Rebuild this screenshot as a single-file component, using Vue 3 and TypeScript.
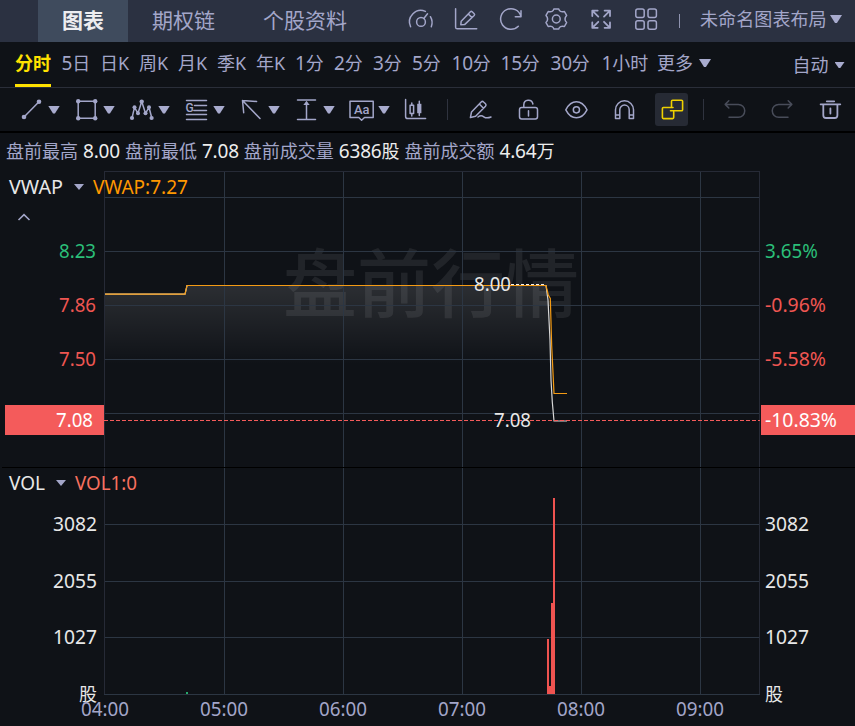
<script setup lang="ts">
interface Label { text: string; x: number; y: number; w: number; cls: string }

const periods: [string, string][] = [
  ['', '分时'], ['5', '日'], ['', '日K'], ['', '周K'], ['', '月K'], ['', '季K'], ['', '年K'],
  ['1', '分'], ['2', '分'], ['3', '分'], ['5', '分'], ['10', '分'], ['15', '分'], ['30', '分'], ['1', '小时'],
]

const stats: { name: string; value: string; unit: string }[] = [
  { name: '盘前最高', value: '8.00', unit: '' },
  { name: '盘前最低', value: '7.08', unit: '' },
  { name: '盘前成交量', value: '6386', unit: '股' },
  { name: '盘前成交额', value: '4.64', unit: '万' },
]

const hours: number[] = [224.5, 343.5, 462.5, 581.5, 700.5]
const priceRows: number[] = [197.5, 251.5, 305.5, 359.5, 413.5]
const volumeRows: number[] = [524.5, 581.5, 637.5]

const labels: Label[] = [
  { text: 'VWAP', x: 9, y: 194, w: 54, cls: 'white' },
  { text: 'VWAP:7.27', x: 93, y: 194, w: 95, cls: 'orange' },
  { text: '8.23', x: 59, y: 258, w: 37, cls: 'green' },
  { text: '7.86', x: 59, y: 312, w: 37, cls: 'red' },
  { text: '7.50', x: 59, y: 366, w: 37, cls: 'red' },
  { text: '3.65%', x: 765, y: 258, w: 53, cls: 'green' },
  { text: '-0.96%', x: 765, y: 312, w: 61, cls: 'red' },
  { text: '-5.58%', x: 765, y: 366, w: 61, cls: 'red' },
  { text: '7.08', x: 56, y: 427, w: 37, cls: 'bright' },
  { text: '-10.83%', x: 765, y: 427, w: 72, cls: 'bright' },
  { text: '8.00', x: 474, y: 291, w: 37, cls: 'white' },
  { text: '7.08', x: 494, y: 427, w: 37, cls: 'white' },
  { text: 'VOL', x: 9, y: 490, w: 36, cls: 'white' },
  { text: 'VOL1:0', x: 75, y: 490, w: 62, cls: 'coral' },
  { text: '3082', x: 53, y: 531, w: 44, cls: 'white' },
  { text: '2055', x: 53, y: 588, w: 44, cls: 'white' },
  { text: '1027', x: 53, y: 644, w: 44, cls: 'white' },
  { text: '股', x: 79, y: 701, w: 18, cls: 'white unit' },
  { text: '3082', x: 765, y: 531, w: 44, cls: 'white' },
  { text: '2055', x: 765, y: 588, w: 44, cls: 'white' },
  { text: '1027', x: 765, y: 644, w: 44, cls: 'white' },
  { text: '股', x: 765, y: 701, w: 18, cls: 'white unit' },
  { text: '04:00', x: 81, y: 716, w: 48, cls: 'muted' },
  { text: '05:00', x: 200, y: 716, w: 48, cls: 'muted' },
  { text: '06:00', x: 319, y: 716, w: 48, cls: 'muted' },
  { text: '07:00', x: 438, y: 716, w: 48, cls: 'muted' },
  { text: '08:00', x: 557, y: 716, w: 48, cls: 'muted' },
  { text: '09:00', x: 676, y: 716, w: 48, cls: 'muted' },
]

const line = 'M105 294.2H185L187 285.5H546'
const pricePath = line + 'L548 300L550 340L551 380L552.3 402L554 421H567'
const vwapPath = line + 'L548.3 295L550.3 298.5L551.7 346L554 393.5H567'
const areaPath = line + 'L548 300L550 340L551 370H105Z'
</script>

<template>
  <div class="app">
    <header class="top">
      <nav class="tabs">
        <span class="tab active">图表</span>
        <span class="tab">期权链</span>
        <span class="tab">个股资料</span>
      </nav>
      <div class="top-icons">
        <svg class="icon" viewBox="0 0 24 24"><circle cx="12" cy="13.9" r="4.4" /><path d="M1.6 18.7A11.4 11.4 0 0 1 16.4 3.4M21.4 8.7A11.4 11.4 0 0 1 22.3 18.7M14.8 10.5L18.5 5.8" /></svg>
        <svg class="icon" viewBox="0 0 24 24"><path d="M1.6.8V19.2Q1.6 20.8 3.4 20.8H22.7M6.8 16.8L7.2 13.2L16.4 3.8Q17.3 3 18.2 3.8L20.2 5.8Q21 6.6 20.2 7.5L10.6 16.6ZM14.3 6L18 9.6" /></svg>
        <svg class="icon" viewBox="0 0 24 24"><path d="M21.9 8.4A10.3 10.3 0 1 0 19.3 18.2M22 2.8V8.7H16.3" /></svg>
        <svg class="icon" viewBox="0 0 24 24"><circle cx="12.3" cy="11" r="3.9" /><path d="M9.9 .9H14.7Q15.5 4.6 20.4 3.5L22.6 7.4Q19.4 11 22.6 14.6L20.4 18.5Q15.5 17.4 14.7 21.1H9.9Q9.1 17.4 4.2 18.5L2 14.6Q5.2 11 2 7.4L4.2 3.5Q9.1 4.6 9.9 .9Z" /></svg>
        <svg class="icon strong" viewBox="0 0 24 24"><path d="M3.3 8V2.6H8.7M3.3 2.6L9.3 8.6M15.6 2.6H21V8M21 2.6L15 8.6M3.3 14.4V19.8H8.7M3.3 19.8L9.3 13.8M15.6 19.8H21V14.4M21 19.8L15 13.8" /></svg>
        <svg class="icon" viewBox="0 0 24 24"><rect x="1.8" y="1" width="8.4" height="8.4" rx="2" /><rect x="14" y="1" width="8.4" height="8.4" rx="2" /><rect x="1.8" y="12.8" width="8.4" height="8.4" rx="2" /><rect x="14" y="12.8" width="8.4" height="8.4" rx="2" /></svg>
      </div>
      <i class="top-sep"></i>
      <span class="layout-name">未命名图表布局</span>
      <i class="caret"></i>
    </header>

    <nav class="periods">
      <span v-for="(p, i) in periods" :key="i" :class="['period', { on: i === 0 }]"><span v-if="p[0]" class="num">{{ p[0] }}</span>{{ p[1] }}</span>
      <span class="period more">更多<i class="caret"></i></span>
      <span class="period auto">自动<i class="caret small"></i></span>
    </nav>

    <div class="tools">
      <div class="tool-group draw">
        <svg class="icon" viewBox="0 0 24 24"><path d="M5 19L20 3.7" /><circle class="fill" cx="5" cy="19" r="2.3" /><circle class="fill" cx="20" cy="3.7" r="2.3" /></svg><i class="caret"></i>
        <svg class="icon" viewBox="0 0 24 24"><rect x="4.2" y="3.2" width="17" height="17" /><g class="fill"><circle cx="4.2" cy="3.2" r="2.2" /><circle cx="21.2" cy="3.2" r="2.2" /><circle cx="4.2" cy="20.2" r="2.2" /><circle cx="21.2" cy="20.2" r="2.2" /></g></svg><i class="caret"></i>
        <svg class="icon wide" viewBox="0 0 25 24"><path d="M3 20L5.5 9.3L9 15.3L12.7 3.6L16.5 15.3L20 9.3L22.8 20" /><g class="fill"><circle cx="3" cy="20" r="2.1" /><circle cx="5.5" cy="9.3" r="2" /><circle cx="9" cy="15.3" r="2" /><circle cx="12.7" cy="3.6" r="2.2" /><circle cx="16.5" cy="15.3" r="2" /><circle cx="20" cy="9.3" r="2" /><circle cx="22.6" cy="20" r="2.1" /></g></svg><i class="caret"></i>
        <svg class="icon" viewBox="0 0 24 24"><path d="M2.5 2.5H22.5M10.5 7.5H22.5M9.8 12.5H22.5M2.5 16.5H22.5M2.5 21.5H22.5" /><text class="glyph" x="1.5" y="14.3" font-size="12">G</text></svg><i class="caret"></i>
        <svg class="icon" viewBox="0 0 24 24"><path d="M21 20.5L3.5 2.5L17.6 3.5M3.5 2.5L4.7 14.7" /></svg><i class="caret"></i>
        <svg class="icon" viewBox="0 0 24 24"><path d="M3.5 2H21.5M3.5 21.5H21.5M12.5 4V21" /><path class="fill" d="M12.5 3L15.7 7H9.3Z" /></svg><i class="caret"></i>
        <svg class="icon wide" viewBox="0 0 25 24"><path d="M1 3.2H24.2V19.5H15.5L12.6 22.2L9.8 19.5H1Z" /><text class="glyph" x="5" y="15.6" font-size="12.5" textLength="15.5" lengthAdjust="spacingAndGlyphs">Aa</text></svg><i class="caret"></i>
        <svg class="icon" viewBox="0 0 24 24"><path d="M1.6 1.5V18.5Q1.6 20.6 3.8 20.6H21.6M7.8 5V7M7.8 15.5V18M15.3 3.3V17.6" /><rect x="6.1" y="7.2" width="3.5" height="8.2" /><rect class="fill" x="13.2" y="5.8" width="4.2" height="9.4" /></svg>
      </div>
      <i class="sep first"></i>
      <div class="tool-group cells">
        <span class="cell"><svg class="icon" viewBox="0 0 24 24"><path d="M2.4 19.6L3.5 14L13.2 4Q14.4 2.8 15.6 4L17.5 5.8Q18.6 7 17.5 8.2L7.6 18.3ZM11.3 6L15.5 10.2M10 19Q13 16.8 15.8 18.8T23 19" /></svg></span>
        <span class="cell"><svg class="icon" viewBox="0 0 24 24"><rect x="3.5" y="9.5" width="18" height="11.5" rx="2.2" /><path d="M7.8 9.2V6.8A4.6 4.6 0 0 1 16.9 6M12.5 12.8V18" /></svg></span>
        <span class="cell"><svg class="icon" viewBox="0 0 24 24"><path d="M1.8 11.8Q6 3.8 12.4 3.8T23 11.8Q18.8 19.8 12.4 19.8T1.8 11.8Z" /><circle cx="12.4" cy="11.8" r="3.1" /></svg></span>
        <span class="cell"><svg class="icon" viewBox="0 0 24 24"><path d="M3.5 20.5V11.8A9 9 0 0 1 21.5 11.8V20.5H17.2V11.8A4.7 4.7 0 0 0 7.8 11.8V20.5ZM3.5 17H7.8M17.2 17H21.5" /></svg></span>
        <span class="cell"><span class="chosen"><svg class="icon gold" viewBox="0 0 24 24"><path d="M11.5 8.5V3.3Q11.5 2.2 12.6 2.2H21.5Q22.6 2.2 22.6 3.3V11.7Q22.6 12.8 21.5 12.8H10.5M13.7 14V19.6Q13.7 20.6 12.6 20.6H3.4Q2.4 20.6 2.4 19.6V10.5Q2.4 9.5 3.4 9.5H13" /></svg></span></span>
      </div>
      <i class="sep second"></i>
      <div class="tool-group cells">
        <span class="cell"><svg class="icon dim" viewBox="0 0 24 24"><path d="M5.8 2.8L2.2 6.4L5.8 10M2.4 6.4H15.3A6.4 6.4 0 0 1 15.3 19.3H6" /></svg></span>
        <span class="cell"><svg class="icon dim" viewBox="0 0 24 24"><path d="M17.2 2.8L20.8 6.4L17.2 10M20.6 6.4H7.7A6.4 6.4 0 0 0 7.7 19.3H17" /></svg></span>
        <span class="cell"><svg class="icon strong" viewBox="0 0 24 24"><path d="M7.8 3.3H15.2M1.6 6.3H21.3M4.3 6.3V17.2Q4.3 20 7 20H15.7Q18.4 20 18.4 17.2V6.3M11.4 10.5V15.5" /></svg></span>
      </div>
    </div>

    <div class="stats">
      <template v-for="s in stats" :key="s.name">
        <span>{{ s.name }}</span><b><span class="num">{{ s.value }}</span>{{ s.unit }}</b>
      </template>
    </div>

    <svg class="chart" width="855" height="555" viewBox="0 171 855 555">
      <defs>
        <linearGradient id="area" gradientUnits="userSpaceOnUse" x1="0" y1="285" x2="0" y2="364">
          <stop offset="0" stop-color="#ffffff" stop-opacity=".12" />
          <stop offset="1" stop-color="#ffffff" stop-opacity="0" />
        </linearGradient>
      </defs>
      <text class="watermark" x="283" y="311" textLength="296">盘前行情</text>
      <path :d="areaPath" fill="url(#area)" />
      <g class="grid">
        <path v-for="x in hours" :key="x" :d="`M${x} 172V694`" />
        <path v-for="y in priceRows" :key="y" :d="`M104 ${y}H759`" />
        <path v-for="y in volumeRows" :key="y" :d="`M104 ${y}H759`" />
        <path d="M104 694.5H760" />
        <path class="frame" d="M104.5 694V171.5H759.5V694" />
      </g>
      <path class="divide" d="M2 467.5H855" />
      <path class="price" :d="pricePath" />
      <path class="vwap" :d="vwapPath" />
      <path class="last" d="M104 420.5H760" />
      <path class="leader" d="M511 284.5H546" />
      <rect class="tag" x="5" y="405" width="99" height="30" />
      <rect class="tag" x="761" y="405" width="94" height="30" />
      <path class="bars" d="M547 694V639H549V686H551V603H553V498H555V694Z" />
      <rect class="up-bar" x="186" y="692" width="2" height="2" />
      <path class="drop" d="M74 184H84L79 190ZM56 480H66L61 486Z" />
      <path class="fold" d="M18.5 220L24 214.7L29.5 220" />
      <text v-for="(l, i) in labels" :key="i" :class="['label', l.cls]" :x="l.x" :y="l.y" :textLength="l.w" lengthAdjust="spacingAndGlyphs">{{ l.text }}</text>
    </svg>
  </div>
</template>

<style>
body { background: #0f1217; }
</style>

<style scoped>
.app {
  width: 855px;
  height: 726px;
  overflow: hidden;
  background: #0f1217;
  color: #a3a6c9;
  font-family: "Noto Sans", "Noto Sans CJK SC", sans-serif;
  font-size: 18px;
  white-space: nowrap;
}
.top {
  display: flex;
  align-items: center;
  height: 42px;
  background: #2b3141;
}
.tabs {
  display: flex;
  width: 409px;
  height: 42px;
  padding-left: 38px;
  box-sizing: border-box;
  font-size: 21px;
  line-height: 40px;
}
.tab { margin-left: 24px; }
.tab + .tab + .tab { margin-left: 48px; }
.tab.active {
  width: 90px;
  margin-left: 0;
  background: #3f4b5d;
  color: #ededf0;
  font-weight: 700;
  text-align: center;
}
.top-icons {
  display: flex;
  gap: 21px;
  padding-bottom: 2px;
}
.top-sep {
  width: 1px;
  height: 14px;
  margin: 0 20px 0 21px;
  background: #8f93b0;
}
.layout-name { width: 130px; line-height: 38px; padding-bottom: 4px; letter-spacing: .1px; }
.icon {
  display: block;
  flex: none;
  width: 24px;
  height: 24px;
  overflow: visible;
  fill: none;
  stroke: #a3a6c9;
  stroke-width: 1.5;
  stroke-linejoin: round;
  stroke-linecap: round;
}
.icon.strong { stroke-width: 1.8; }
.icon.gold { stroke: #eed000; stroke-width: 1.6; }
.icon.dim { stroke: #484c59; }
.icon.wide { width: 25px; margin-right: -1px; }
.fill { fill: #a3a6c9; stroke: none; }
.glyph { fill: #a3a6c9; stroke: none; font-family: Roboto, sans-serif; font-weight: 500; }
.caret {
  display: block;
  flex: none;
  width: 12px;
  height: 8px;
  background: #a8abce;
  clip-path: polygon(0 0, 100% 0, 58% 100%, 42% 100%);
}
.caret.small { width: 10px; height: 6px; }
.top .caret { margin-bottom: 4px; }
.num { font-size: 19px; line-height: 1; letter-spacing: -.2px; }

.periods {
  display: grid;
  grid-template-columns: 46.5px 38.5px 39px 39px 39px 39px 39px 39px 39px 39px 39.5px 49px 50px 51px 55.5px 135.5px 54px;
  height: 45px;
  padding-left: 15px;
  border-bottom: 1px solid #2a2e39;
  line-height: 42px;
}
.period.on {
  width: 36px;
  height: 42px;
  border-bottom: 3px solid #ffe100;
  color: #ffe100;
  font-weight: 700;
}
.more, .auto { display: flex; align-items: center; height: 42px; }
.more .caret { margin-left: 6px; }
.auto { padding-top: 2px; }
.auto .caret { margin-left: 6px; }

.tools {
  display: flex;
  align-items: center;
  height: 43px;
  border-bottom: 2px solid #000;
}
.tool-group { display: flex; align-items: center; }
.draw { padding-left: 19px; }
.draw .caret { margin: 0 14px 0 5px; }
.sep { width: 1px; height: 21px; background: #2f333f; }
.sep.first { margin: 0 8px 0 19px; }
.sep.second { margin: 0 8px 0 7px; }
.cell { display: flex; justify-content: center; width: 48px; height: 33px; align-items: center; }
.chosen {
  display: flex;
  align-items: center;
  justify-content: center;
  width: 33px;
  height: 33px;
  border-radius: 3px;
  background: #262a34;
}
.stats {
  display: flex;
  gap: 5px;
  height: 38px;
  padding-left: 6px;
  line-height: 36px;
}
.stats b { color: #ededed; font-weight: 400; }

.chart { display: block; }
.watermark { font-size: 74px; font-weight: 500; fill: #fff; fill-opacity: .08; font-family: "Noto Sans CJK SC", sans-serif; }
.grid path { fill: none; stroke: #2c3643; shape-rendering: crispEdges; }
.grid .frame { stroke: #262a36; }
.divide { stroke: #000; stroke-width: 1; shape-rendering: crispEdges; }
.price { fill: none; stroke: #d8d8d8; stroke-width: 1.2; }
.vwap { fill: none; stroke: #f49b14; stroke-width: 1.2; }
.last { stroke: #f45b5b; stroke-dasharray: 4 2; shape-rendering: crispEdges; }
.leader { stroke: #eee; stroke-dasharray: 3 2; shape-rendering: crispEdges; }
.tag { fill: #f45b5b; }
.bars { fill: #ef5350; shape-rendering: crispEdges; }
.up-bar { fill: #26a96c; }
.drop { fill: #a3a6c9; }
.fold { fill: none; stroke: #a3a6c9; stroke-width: 1.6; }
.label { font-size: 19px; }
.label.unit { font-size: 18px; }
.white { fill: #e8e8e8; }
.bright { fill: #fff; }
.orange { fill: #ff9800; }
.green { fill: #2bbf79; }
.red { fill: #ef5652; }
.coral { fill: #f7705f; }
.muted { fill: #a3a6c9; }
</style>
